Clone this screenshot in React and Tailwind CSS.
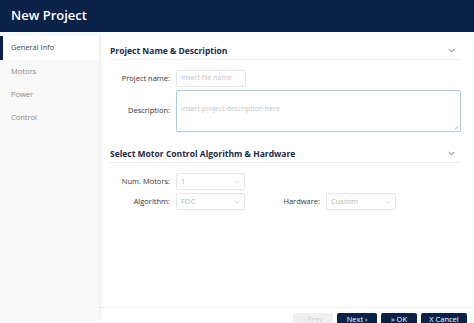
import React from "react";

const Chevron = ({ className = "" }) => (
  <svg viewBox="0 0 10 6" className={className} fill="none" stroke="currentColor" strokeWidth="1.2">
    <path d="M1 1l4 4 4-4" />
  </svg>
);

const SectionHeader = ({ title }) => (
  <div className="flex items-center justify-between h-[16px] border-b border-[#ececec] pr-[6px]">
    <span className="text-[8.5px] font-bold text-[#1b2a4a]">{title}</span>
    <Chevron className="w-[7px] h-[5px] text-[#555] -mt-[3px]" />
  </div>
);

const Select = ({ value, w = "w-[69px]" }) => (
  <div className={`${w} h-[17px] border border-[#e6e6e6] rounded-[2px] flex items-center justify-between px-[4px] bg-white`}>
    <span className="text-[7.5px] text-[#b5b5b5]">{value}</span>
    <Chevron className="w-[6px] h-[4px] text-[#c8c8c8]" />
  </div>
);

export default function App() {
  return (
    <div className="w-[474px] h-[323px] flex flex-col overflow-hidden bg-white" style={{ fontFamily: '"Open Sans", "Noto Sans", sans-serif' }}>
      <div className="h-[32px] bg-[#0b2248] flex items-center pl-[11px] shrink-0">
        <span className="text-white text-[13px] font-semibold">New Project</span>
      </div>
      <div className="flex flex-1 min-h-0">
        <div className="w-[99px] shrink-0 bg-[#f8f8f8] shadow-[2px_0_4px_rgba(0,0,0,0.08)] pt-[4px] h-[288px] z-10">
          <div className="h-[24px] bg-white border-l-[3px] border-[#0b2248] flex items-center pl-[8px] text-[7.5px] text-[#444]">General Info</div>
          <div className="h-[23px] flex items-center pl-[11px] text-[7.5px] text-[#888]">Motors</div>
          <div className="h-[23px] flex items-center pl-[11px] text-[7.5px] text-[#888]">Power</div>
          <div className="h-[23px] flex items-center pl-[11px] text-[7.5px] text-[#888]">Control</div>
        </div>
        <div className="flex-1 flex flex-col min-w-0">
          <div className="flex-1 pl-[11px] pr-[13px] pt-[12px]">
            <SectionHeader title="Project Name & Description" />
            <div className="mt-[10px] flex items-center gap-[6px]">
              <span className="w-[60px] text-right text-[7.5px] text-[#333]">Project name:</span>
              <div className="w-[70px] h-[17px] border border-[#e6e6e6] rounded-[2px] flex items-center px-[4px]">
                <span className="text-[7px] text-[#c4c4c4]">Insert file name</span>
              </div>
            </div>
            <div className="mt-[3px] flex items-center gap-[6px]">
              <span className="w-[60px] text-right text-[7.5px] text-[#333]">Description:</span>
              <div className="flex-1 h-[42px] border border-[#a9cbe8] rounded-[2px] px-[4px] pt-[2px] relative">
                <span className="text-[7px] text-[#c4c4c4]">Insert project description here</span>
                <svg viewBox="0 0 6 6" className="absolute right-[1px] bottom-[1px] w-[5px] h-[5px] text-[#aaa]" stroke="currentColor" strokeWidth="0.8">
                  <path d="M5 1L1 5M5 3L3 5" />
                </svg>
              </div>
            </div>
            <div className="mt-[15px]">
              <SectionHeader title="Select Motor Control Algorithm & Hardware" />
            </div>
            <div className="mt-[10px] flex items-center gap-[6px]">
              <span className="w-[60px] text-right text-[7.5px] text-[#333]">Num. Motors:</span>
              <Select value="1" />
            </div>
            <div className="mt-[3px] flex items-center gap-[6px]">
              <span className="w-[60px] text-right text-[7.5px] text-[#333]">Algorithm:</span>
              <Select value="FOC" />
              <span className="w-[69px] text-right text-[7.5px] text-[#333]">Hardware:</span>
              <Select value="Custom" w="w-[70px]" />
            </div>
          </div>
          <div className="h-[16px] border-t border-[#f0f0f0] flex items-end justify-end gap-[4px] pr-[7px] shrink-0">
            <div className="w-[40px] h-[10px] bg-[#f0f0f0] rounded-t-[2px] flex items-start justify-center pt-[1px] text-[7.5px] text-[#cfcfcf]">‹ Prev</div>
            <div className="w-[40px] h-[10px] bg-[#0b2248] rounded-t-[2px] flex items-start justify-center pt-[1px] text-[7.5px] text-white">Next ›</div>
            <div className="w-[36px] h-[10px] bg-[#0b2248] rounded-t-[2px] flex items-start justify-center pt-[1px] text-[7.5px] text-white">» OK</div>
            <div className="w-[46px] h-[10px] bg-[#0b2248] rounded-t-[2px] flex items-start justify-center pt-[1px] text-[7.5px] text-white">X Cancel</div>
          </div>
        </div>
      </div>
    </div>
  );
}
